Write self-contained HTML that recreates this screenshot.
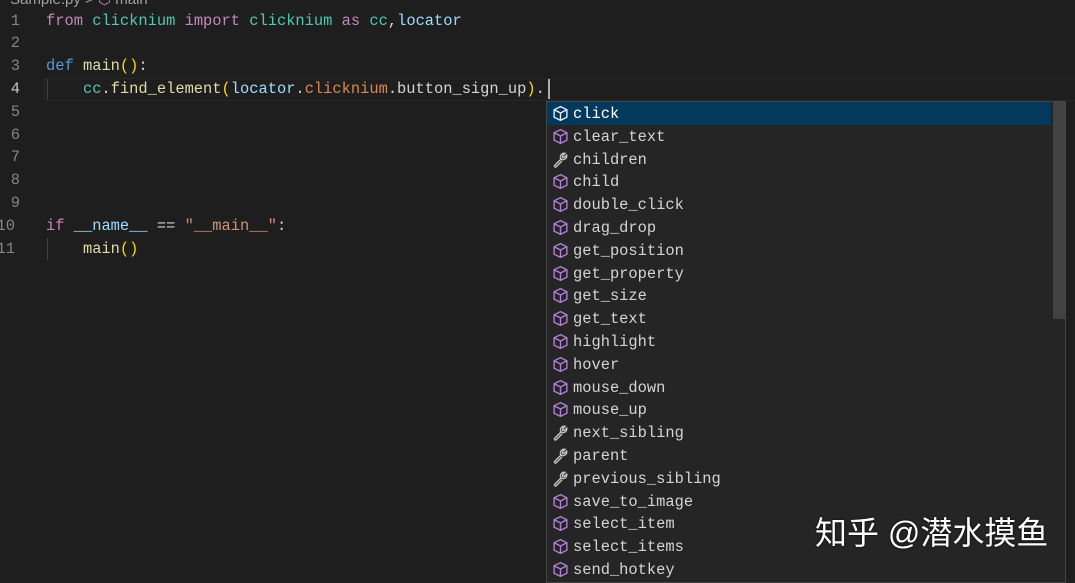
<!DOCTYPE html>
<html><head><meta charset="utf-8"><style>
body{margin:0;width:1075px;height:579px;background:#1e1e1e;overflow:hidden;position:relative;font-family:"Liberation Mono",monospace;font-size:15.4px;}
.ln{position:absolute;left:0;width:20px;text-align:right;color:#858585;height:22.8px;line-height:22.8px}
.cl{position:absolute;left:46px;height:22.8px;line-height:22.8px;color:#d4d4d4;white-space:pre}
.k{color:#c586c0}.t{color:#4ec9b0}.b{color:#569cd6}.f{color:#dcdcaa}.p{color:#ffd700}.v{color:#9cdcfe}.s{color:#ce9178}.o{color:#d7894e}
.pop{position:absolute;left:546px;top:101px;width:518px;height:480px;background:#252526;border:1px solid #454545;}
.row{position:absolute;left:0;width:504px;height:22.8px;line-height:22.8px;color:#d4d4d4;white-space:pre}
.row svg{position:absolute;left:5px;top:3px}
.row span{position:absolute;left:26px;top:1px}
.sel{background:#04395e;color:#fff}
</style></head><body>
<div style="position:absolute;left:10px;top:-10px;color:#a0a0a0;font-family:'Liberation Sans',sans-serif;font-size:15px">Sample.py &gt; <span style="color:#b180d7">⬡</span> main</div>
<div style="position:absolute;left:44px;top:78px;width:1031px;height:21px;border:1px solid #282828"></div>
<div style="position:absolute;left:47px;top:79px;width:1px;height:21px;background:#404040"></div>
<div style="position:absolute;left:47px;top:238px;width:1px;height:22px;background:#404040"></div>
<div style="position:absolute;left:0;top:1px;width:1075px;height:300px">
<div class="ln" style="top:8.6px">1</div><div class="ln" style="top:31.4px">2</div><div class="ln" style="top:54.2px">3</div><div class="ln" style="top:77px;color:#c6c6c6">4</div><div class="ln" style="top:99.8px">5</div><div class="ln" style="top:122.6px">6</div><div class="ln" style="top:145.4px">7</div><div class="ln" style="top:168.2px">8</div><div class="ln" style="top:191px">9</div><div class="ln" style="top:213.8px;left:-5px;width:20px">10</div><div class="ln" style="top:236.6px;left:-5px;width:20px">11</div>
<div class="cl" style="top:8.6px"><span class="k">from</span> <span class="t">clicknium</span> <span class="k">import</span> <span class="t">clicknium</span> <span class="k">as</span> <span class="t">cc</span>,<span class="v">locator</span></div>
<div class="cl" style="top:54.2px"><span class="b">def</span> <span class="f">main</span><span class="p">()</span>:</div>
<div class="cl" style="top:77px">    <span class="t">cc</span>.<span class="f">find_element</span><span class="p">(</span><span class="v">locator</span>.<span class="o">clicknium</span>.button_sign_up<span class="p">)</span>.</div>
<div class="cl" style="top:213.8px"><span class="k">if</span> <span class="v">__name__</span> == <span class="s">"__main__"</span>:</div>
<div class="cl" style="top:236.6px">    <span class="f">main</span><span class="p">()</span></div>
</div>
<div style="position:absolute;left:548px;top:79px;width:2px;height:20px;background:#aeafad"></div>
<div class="pop">
<div style="position:absolute;right:0;top:0;width:12px;height:217px;background:#424242"></div>
<div id="rows"></div>
</div>
<div style="position:absolute;left:815px;top:513px;color:#fff;font-family:'Liberation Sans','Noto Sans CJK SC',sans-serif;font-size:32px;line-height:40px;text-shadow:0 0 2px #000">知乎 @潜水摸鱼</div>
<script>
var items=["click","clear_text","children","child","double_click","drag_drop","get_position","get_property","get_size","get_text","highlight","hover","mouse_down","mouse_up","next_sibling","parent","previous_sibling","save_to_image","select_item","select_items","send_hotkey"];
var wr={"children":1,"next_sibling":1,"parent":1,"previous_sibling":1};
var cube=function(c){return '<svg width="17" height="17" viewBox="0 0 16 16" fill="none" stroke="'+c+'" stroke-width="1.3"><path d="M8 1.5L14 4.5V11.5L8 14.5L2 11.5V4.5Z M2 4.5L8 7.5L14 4.5 M8 7.5V14.5"/></svg>'};
var wrench='<svg width="17" height="17" viewBox="0 0 16 16" fill="none" stroke="#c5c5c5" stroke-width="1.3"><path d="M2.5 13.5L8.5 7.5A3.5 3.5 0 0 0 13.8 3.8L11.5 6L10 6L10 4.5L12.2 2.2A3.5 3.5 0 0 0 8.5 7.5 M2.5 13.5A1 1 0 0 0 3.9 14.9L9.5 9.3"/></svg>';
var h="";items.forEach(function(s,i){var ic=wr[s]?wrench:cube(i==0?"#e0f0ff":"#b180d7");h+='<div class="row'+(i==0?' sel':'')+'" style="top:'+(i*22.8)+'px">'+ic+'<span>'+s+'</span></div>';});
document.getElementById("rows").innerHTML=h;
</script>
</body></html>
